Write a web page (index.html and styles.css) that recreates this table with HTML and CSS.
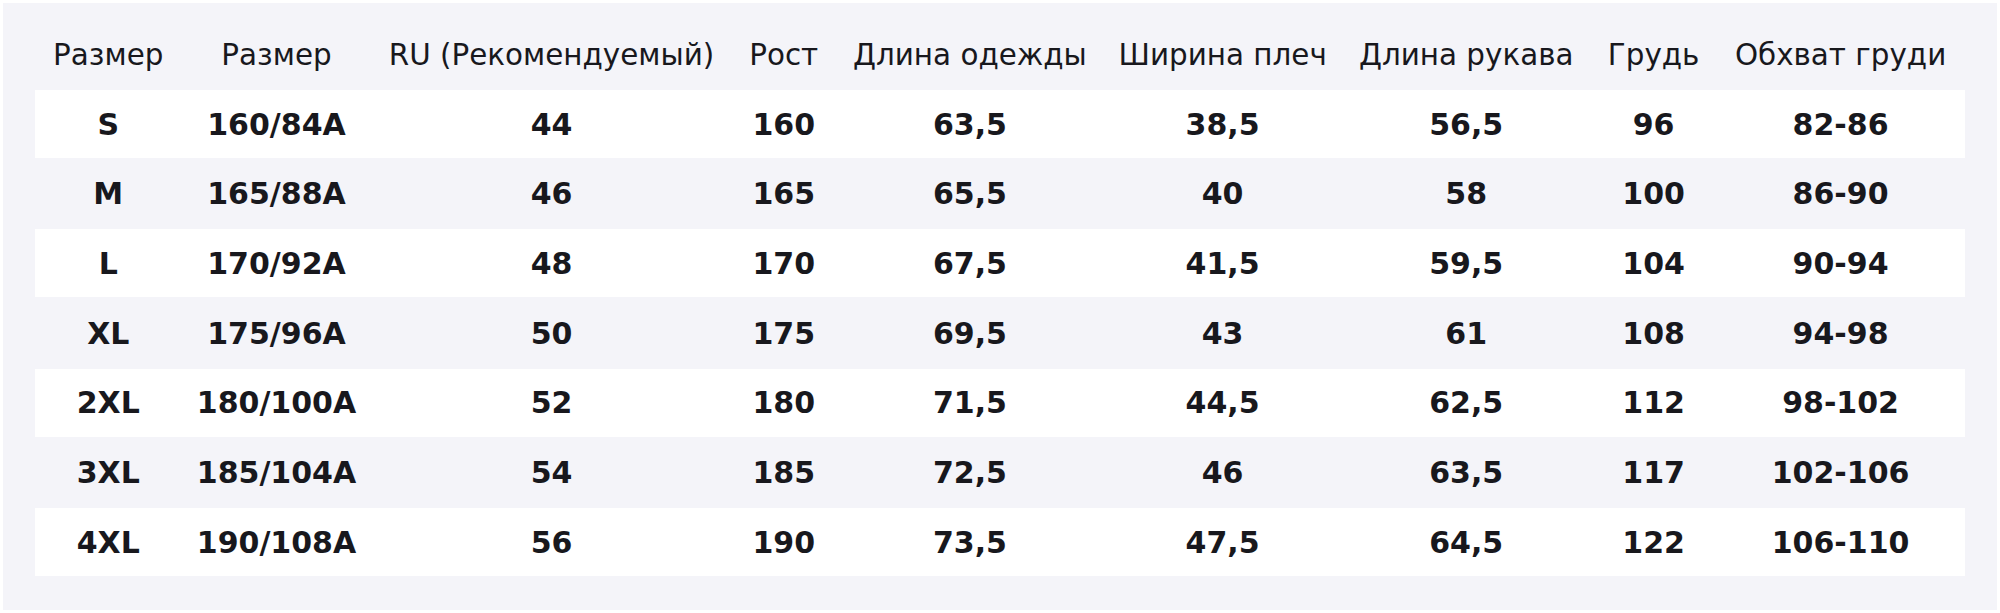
FILE: index.html
```html
<!DOCTYPE html>
<html lang="ru">
<head>
<meta charset="utf-8">
<title>Таблица размеров</title>
<link rel="stylesheet" href="styles.css">
</head>
<body>
<div class="panel">
<table class="sizes">
<colgroup>
<col class="c1"><col class="c2"><col class="c3"><col class="c4"><col class="c5"><col class="c6"><col class="c7"><col class="c8"><col class="c9">
</colgroup>
<thead>
<tr><th>Размер</th><th>Размер</th><th>RU (Рекомендуемый)</th><th>Рост</th><th>Длина одежды</th><th>Ширина плеч</th><th>Длина рукава</th><th>Грудь</th><th>Обхват груди</th></tr>
</thead>
<tbody>
<tr><td>S</td><td>160/84A</td><td>44</td><td>160</td><td>63,5</td><td>38,5</td><td>56,5</td><td>96</td><td>82-86</td></tr>
<tr><td>M</td><td>165/88A</td><td>46</td><td>165</td><td>65,5</td><td>40</td><td>58</td><td>100</td><td>86-90</td></tr>
<tr><td>L</td><td>170/92A</td><td>48</td><td>170</td><td>67,5</td><td>41,5</td><td>59,5</td><td>104</td><td>90-94</td></tr>
<tr><td>XL</td><td>175/96A</td><td>50</td><td>175</td><td>69,5</td><td>43</td><td>61</td><td>108</td><td>94-98</td></tr>
<tr><td>2XL</td><td>180/100A</td><td>52</td><td>180</td><td>71,5</td><td>44,5</td><td>62,5</td><td>112</td><td>98-102</td></tr>
<tr><td>3XL</td><td>185/104A</td><td>54</td><td>185</td><td>72,5</td><td>46</td><td>63,5</td><td>117</td><td>102-106</td></tr>
<tr><td>4XL</td><td>190/108A</td><td>56</td><td>190</td><td>73,5</td><td>47,5</td><td>64,5</td><td>122</td><td>106-110</td></tr>
</tbody>
</table>
</div>
</body>
</html>
```
FILE: styles.css
```css
html, body {
  margin: 0;
  padding: 0;
  background: #ffffff;
}
body {
  padding: 3px;
  font-family: "DejaVu Sans", "Noto Sans", sans-serif;
}
.panel {
  background: #f4f4f9;
  height: 607px;
  box-sizing: border-box;
  padding: 17px 32px 0 32px;
}
.sizes {
  border-collapse: collapse;
  table-layout: fixed;
  width: 1930px;
  font-size: 30px;
  color: #18181d;
}
.c1 { width: 146.5px; }
.c2 { width: 190px; }
.c3 { width: 360px; }
.c4 { width: 104.4px; }
.c5 { width: 268px; }
.c6 { width: 237.4px; }
.c7 { width: 249.8px; }
.c8 { width: 125px; }
.c9 { width: 248.8px; }
.sizes th, .sizes td {
  padding: 0;
  text-align: center;
  vertical-align: middle;
  white-space: nowrap;
  line-height: 35px;
}
.sizes th {
  font-weight: normal;
  font-size: 29.4px;
  height: 70px;
}
.sizes td {
  font-weight: bold;
}
.sizes tbody tr:nth-child(odd) {
  background: #ffffff;
}
.sizes tbody tr:nth-child(odd) td {
  height: 68px;
}
.sizes tbody tr:nth-child(even) td {
  height: 71.4px;
}
```
